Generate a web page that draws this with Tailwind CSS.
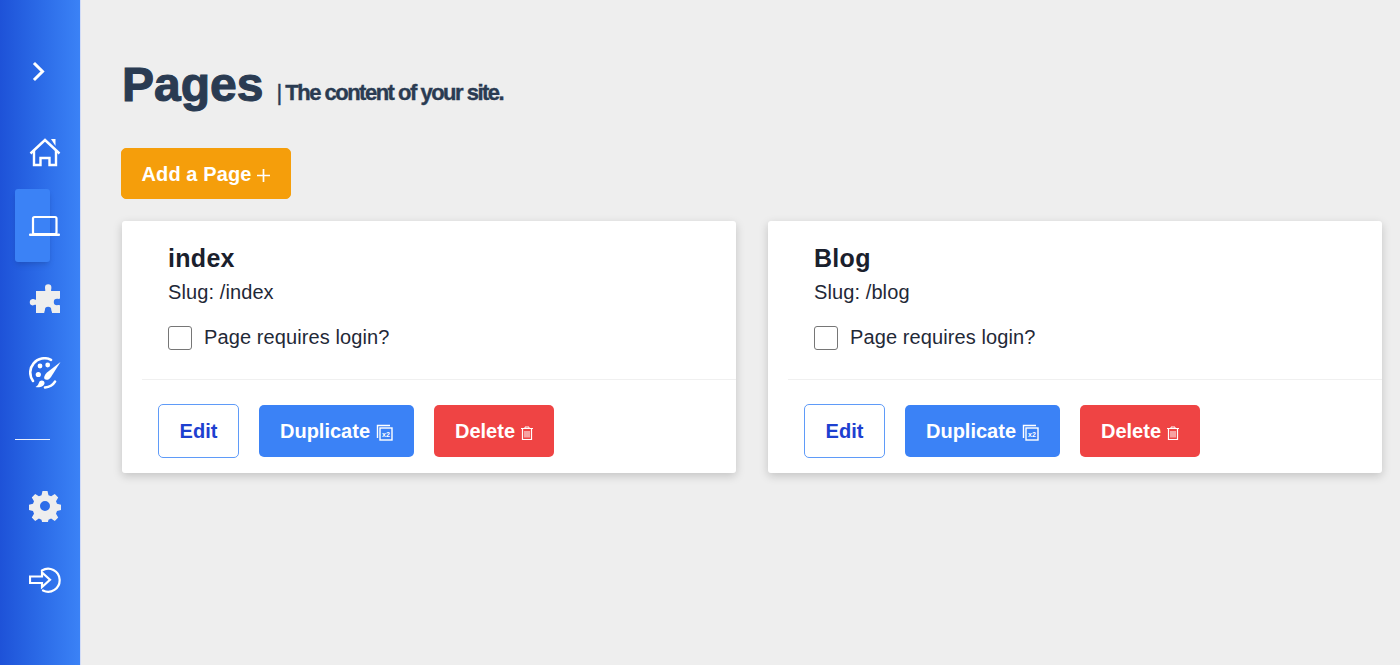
<!DOCTYPE html>
<html>
<head>
<meta charset="utf-8">
<script src="https://cdn.jsdelivr.net/npm/@tailwindcss/browser@4"></script>
</head>
<body class="m-0 bg-[#eeeeee] font-['Liberation_Sans',Arial,sans-serif]">
<div class="flex h-[665px] w-[1400px] overflow-hidden">
  <aside class="flex h-full w-[81px] shrink-0 flex-col border-r border-r-white/80 bg-gradient-to-r from-[#1e52d8] to-[#3b82f6] text-white">
    <div class="flex h-[37px] shrink-0 mt-[53px] items-center pl-[27px]">
      <svg width="24" height="24" viewBox="0 0 24 24" fill="none" stroke="white" stroke-width="3" stroke-linecap="square"><path d="M8 4 15.500 11.500 8 19"/></svg>
    </div>
    <div class="mt-[43px] flex h-[37px] shrink-0 items-center pl-[29px]">
      <svg width="32" height="32" viewBox="0 0 32 32" fill="none" stroke="white" stroke-width="2.400"><path d="M1.500 17.500 16 4l14.500 13.500"/><path d="M5 14.500V29h6.500v-7h9v7H27V14.500"/><path d="M22 3h4.500v7z" fill="white" stroke="none"/></svg>
    </div>
    <div class="relative mt-[19px] flex h-[73px] shrink-0 items-center pl-[29px]">
      <div class="absolute left-[15px] top-0 h-[73px] w-[35px] rounded-[3px] bg-[#3b82f6] shadow-md"></div>
      <svg class="relative" width="32" height="32" viewBox="0 0 32 32" fill="none" stroke="white" stroke-width="2.200"><rect x="4" y="7" width="23.500" height="17" rx="1.500"/><rect x="0" y="23.500" width="31" height="2.400" rx="1" fill="white" stroke="none"/></svg>
    </div>
    <div class="mt-[19px] flex h-[37px] shrink-0 items-center pl-[29px]">
      <svg width="32" height="32" viewBox="0 0 32 32" fill="#eeeeee"><path d="M7 7H16C16.800 7 16 5.500 16 3.500A3.200 3.200 0 0 1 22.400 3.500C22.400 5.500 21.600 7 22.400 7H31V14.500C30 15.200 29.500 14.800 28 14.800A3.200 3.200 0 0 0 28 21.200C29.500 21.200 30 20.800 31 21.500V29H23C23.300 28 22.300 27 22.300 26A3.200 3.200 0 0 0 15.900 26C15.900 27 15 28 15.300 29H7V21C6.200 20.300 5 21.500 3.500 21.500A3.300 3.300 0 0 1 3.500 15C5 15 6.200 16.200 7 15.500Z"/></svg>
    </div>
    <div class="mt-[36px] flex h-[37px] shrink-0 items-center pl-[29px]">
      <svg width="32" height="32" viewBox="0 0 32 32" fill="none"><path d="M22 2.800A14.300 14.300 0 0 0 4 24M16 30.500C20 30.200 24 28 26 24.700" stroke="white" stroke-width="2.600" stroke-linecap="round"/><circle cx="11" cy="9" r="2.400" fill="white"/><circle cx="18.700" cy="8" r="2.400" fill="white"/><circle cx="9.300" cy="17.500" r="2.600" fill="white"/><path d="M31.500 5 22 20C20 23 17 23.500 15.500 22 14.500 20.500 15.500 18 18 15.500Z" fill="white"/><path d="M6.500 30C10 28.500 9.500 25 11 24 13 22.500 16 24 15.500 26.500 15 29.500 10.500 31 6.500 30Z" fill="white"/></svg>
    </div>
    <div class="ml-[15px] mt-[48px] h-px w-[35px] shrink-0 bg-white/90"></div>
    <div class="mt-[47px] flex h-[37px] shrink-0 items-center pl-[29px]">
      <svg width="32" height="32" viewBox="0 0 32 32"><path fill="#eeeeee" fill-rule="evenodd" d="M13.500 1h5l1 4.200 2.600 1.100 3.700-2.300 3.400 3.500-2.200 3.700 1 2.600 4 1v5.300l-4 1-1 2.600 2.200 3.700-3.400 3.500-3.700-2.300-2.600 1.100-1 4.200h-5l-1-4.200-2.600-1.100-3.700 2.300-3.400-3.500 2.200-3.700-1-2.600-4-1v-5.300l4-1 1-2.600-2.200-3.700 3.400-3.500 3.700 2.300 2.600-1.100zM16 11a5 5 0 1 0 0 10 5 5 0 0 0 0-10z"/></svg>
    </div>
    <div class="mt-[37px] flex h-[37px] shrink-0 items-center pl-[29px]">
      <svg width="32" height="32" viewBox="0 0 32 32" fill="none" stroke="white" stroke-width="2.200"><path d="M13 6.500A11.500 11.500 0 1 1 14 26.500" stroke-linecap="round"/><path d="M1 12.500H13V8.500L21 15.700 13 23V19H1Z"/></svg>
    </div>
  </aside>
  <main class="min-w-0 flex-1 pl-[41px] pr-[18px] pt-[58px]">
    <div class="flex h-[54px] items-baseline text-[#2a3b52]">
      <h1 class="m-0 text-[48px] font-bold leading-[54px] [-webkit-text-stroke:1.100px_#2a3b52]">Pages</h1>
      <span class="ml-[13px] -translate-y-px text-[22px] font-bold tracking-[-1.5px] [-webkit-text-stroke:0.4px_#2a3b52]"><span class="font-normal">|</span> The content of your site.</span>
    </div>
    <button class="-ml-px mt-[36px] flex h-[51px] w-[170px] items-center justify-center rounded-[5px] border border-[#f59e0b] bg-[#f59e0b] text-[20px] font-bold tracking-[0.1px] text-white">Add a Page<svg class="ml-[6px] mt-[3px]" width="13" height="13" viewBox="0 0 13 13" stroke="white" stroke-width="1.700"><path d="M0 6.500h13M6.500 0v13"/></svg></button>
    <div class="mt-[22px] grid grid-cols-2 gap-[32px]">
      <section class="h-[252px] rounded-[3px] bg-white pl-[20px] shadow-[0_3px_10px_rgba(0,0,0,0.18)]">
        <div class="h-[159px] border-b border-[#f0f0f0] pl-[26px] pt-[22px]">
          <h2 class="m-0 text-[25px] font-bold leading-[30px] tracking-[0.3px] text-[#1a202c]">index</h2>
          <p class="m-0 mt-[7px] text-[20px] leading-[25px] tracking-[0.1px] text-[#1f2937]">Slug: /index</p>
          <label class="mt-[20px] flex items-center text-[20px] leading-[25px] tracking-[0.1px] text-[#1f2937]">
            <span class="h-[24px] w-[24px] rounded-[3px] border border-[#767676] bg-white"></span>
            <span class="ml-[12px]">Page requires login?</span>
          </label>
        </div>
        <div class="flex items-center pl-[16px] pt-[24px]">
          <button class="h-[54px] w-[81px] rounded-[5px] border border-[#5f9bf8] bg-white text-[20px] font-bold text-[#1d40d0]">Edit</button>
          <button class="ml-[20px] flex h-[52px] w-[155px] items-center justify-center rounded-[5px] bg-[#3b82f6] text-[20px] font-bold text-white">Duplicate
            <svg class="ml-[6px] mt-[2px]" width="17" height="17" viewBox="0 0 17 17" fill="none" stroke="white"><path d="M1.500 14V1.500H14" stroke-width="1.400"/><rect x="4" y="4" width="12" height="12" stroke-width="1.400"/><text x="10" y="13" font-size="7" font-weight="700" fill="white" stroke="none" text-anchor="middle">x2</text></svg>
          </button>
          <button class="ml-[20px] flex h-[52px] w-[120px] items-center justify-center rounded-[5px] bg-[#ef4444] text-[20px] font-bold text-white">Delete
            <svg class="ml-[6px] mt-[3px]" width="12" height="14" viewBox="0 0 12 14" fill="none" stroke="white"><path d="M0 2.500h12M4 2.500V1h4v1.500" stroke-width="1"/><path d="M1.500 3v10.500h9V3" stroke-width="1.200"/><path d="M4 5v6.500M6 5v6.500M8 5v6.500" stroke-width="1"/></svg>
          </button>
        </div>
      </section>
      <section class="h-[252px] rounded-[3px] bg-white pl-[20px] shadow-[0_3px_10px_rgba(0,0,0,0.18)]">
        <div class="h-[159px] border-b border-[#f0f0f0] pl-[26px] pt-[22px]">
          <h2 class="m-0 text-[25px] font-bold leading-[30px] tracking-[0.3px] text-[#1a202c]">Blog</h2>
          <p class="m-0 mt-[7px] text-[20px] leading-[25px] tracking-[0.1px] text-[#1f2937]">Slug: /blog</p>
          <label class="mt-[20px] flex items-center text-[20px] leading-[25px] tracking-[0.1px] text-[#1f2937]">
            <span class="h-[24px] w-[24px] rounded-[3px] border border-[#767676] bg-white"></span>
            <span class="ml-[12px]">Page requires login?</span>
          </label>
        </div>
        <div class="flex items-center pl-[16px] pt-[24px]">
          <button class="h-[54px] w-[81px] rounded-[5px] border border-[#5f9bf8] bg-white text-[20px] font-bold text-[#1d40d0]">Edit</button>
          <button class="ml-[20px] flex h-[52px] w-[155px] items-center justify-center rounded-[5px] bg-[#3b82f6] text-[20px] font-bold text-white">Duplicate
            <svg class="ml-[6px] mt-[2px]" width="17" height="17" viewBox="0 0 17 17" fill="none" stroke="white"><path d="M1.500 14V1.500H14" stroke-width="1.400"/><rect x="4" y="4" width="12" height="12" stroke-width="1.400"/><text x="10" y="13" font-size="7" font-weight="700" fill="white" stroke="none" text-anchor="middle">x2</text></svg>
          </button>
          <button class="ml-[20px] flex h-[52px] w-[120px] items-center justify-center rounded-[5px] bg-[#ef4444] text-[20px] font-bold text-white">Delete
            <svg class="ml-[6px] mt-[3px]" width="12" height="14" viewBox="0 0 12 14" fill="none" stroke="white"><path d="M0 2.500h12M4 2.500V1h4v1.500" stroke-width="1"/><path d="M1.500 3v10.500h9V3" stroke-width="1.200"/><path d="M4 5v6.500M6 5v6.500M8 5v6.500" stroke-width="1"/></svg>
          </button>
        </div>
      </section>
    </div>
  </main>
</div>
</body>
</html>
